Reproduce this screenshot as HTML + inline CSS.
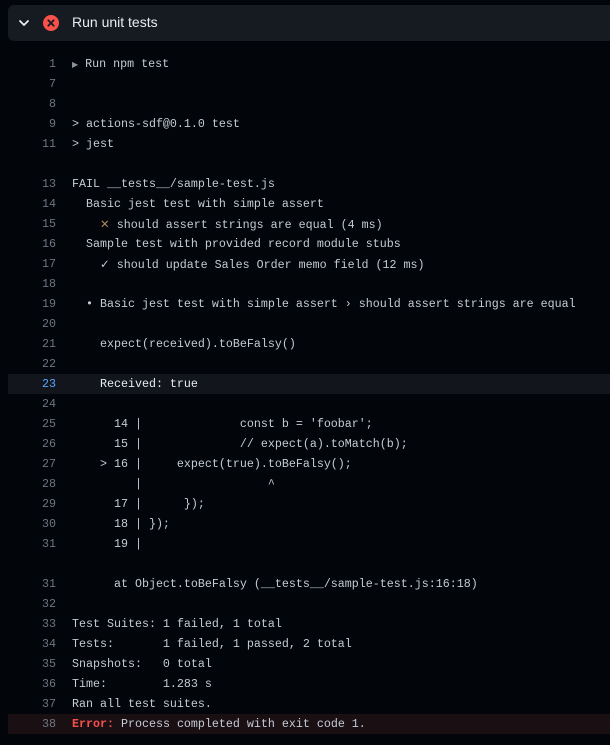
<!DOCTYPE html>
<html><head><meta charset="utf-8"><style>
html,body{margin:0;padding:0;background:#02050a;width:610px;height:745px;overflow:hidden}
.hdr{position:absolute;left:8px;top:5px;width:610px;height:36px;background:#161b22;border-radius:6px}
.hdr .t{position:absolute;left:64px;top:9px;font:14px "Liberation Sans",sans-serif;color:#e6edf3}
.log{position:absolute;left:0;top:54px;width:610px}
.r{position:relative;height:20px;line-height:20px;font:11.67px "Liberation Mono",monospace;color:#c4ccd4;white-space:pre}
.n{position:absolute;right:554px;top:3px;color:#6e7681;text-align:right}
.x{position:absolute;left:72px;top:3px}
.hl{background:#12161c;margin-left:8px}
.hl .n{color:#58a6ff}.hl .x{left:64px}
.er{background:#1a1014;margin-left:8px}
.er .x{left:64px}
</style></head><body>
<div class="hdr">
<svg style="position:absolute;left:10px;top:12px" width="12" height="12" viewBox="0 0 12 12"><path d="M2 4l4 4 4-4" fill="none" stroke="#e6edf3" stroke-width="1.8" stroke-linecap="round" stroke-linejoin="round"/></svg>
<svg style="position:absolute;left:35px;top:10px" width="16" height="16" viewBox="0 0 16 16"><circle cx="8" cy="8" r="8" fill="#f85149"/><path d="M5.3 5.3l5.4 5.4M10.7 5.3l-5.4 5.4" stroke="#161b22" stroke-width="1.8" stroke-linecap="round"/></svg>
<div class="t">Run unit tests</div>
</div>
<div class="log">
<div class="r"><span class="n">1</span><span class="x"><span style="font-size:8px;color:#8b949e">▶</span> Run npm test</span></div>
<div class="r"><span class="n">7</span></div>
<div class="r"><span class="n">8</span></div>
<div class="r"><span class="n">9</span><span class="x">&gt; actions-sdf@0.1.0 test</span></div>
<div class="r"><span class="n">11</span><span class="x">&gt; jest</span></div>
<div class="r"></div>
<div class="r"><span class="n">13</span><span class="x">FAIL __tests__/sample-test.js</span></div>
<div class="r"><span class="n">14</span><span class="x">  Basic jest test with simple assert</span></div>
<div class="r"><span class="n">15</span><span class="x">    <span style="color:#b08a5a">✕</span> should assert strings are equal (4 ms)</span></div>
<div class="r"><span class="n">16</span><span class="x">  Sample test with provided record module stubs</span></div>
<div class="r"><span class="n">17</span><span class="x">    ✓ should update Sales Order memo field (12 ms)</span></div>
<div class="r"><span class="n">18</span></div>
<div class="r"><span class="n">19</span><span class="x">  • Basic jest test with simple assert › should assert strings are equal</span></div>
<div class="r"><span class="n">20</span></div>
<div class="r"><span class="n">21</span><span class="x">    expect(received).toBeFalsy()</span></div>
<div class="r"><span class="n">22</span></div>
<div class="r hl"><span class="n">23</span><span class="x" style="color:#e6edf3">    Received: true</span></div>
<div class="r"><span class="n">24</span></div>
<div class="r"><span class="n">25</span><span class="x">      14 |              const b = 'foobar';</span></div>
<div class="r"><span class="n">26</span><span class="x">      15 |              // expect(a).toMatch(b);</span></div>
<div class="r"><span class="n">27</span><span class="x">    &gt; 16 |     expect(true).toBeFalsy();</span></div>
<div class="r"><span class="n">28</span><span class="x">         |                  ^</span></div>
<div class="r"><span class="n">29</span><span class="x">      17 |      });</span></div>
<div class="r"><span class="n">30</span><span class="x">      18 | });</span></div>
<div class="r"><span class="n">31</span><span class="x">      19 |</span></div>
<div class="r"></div>
<div class="r"><span class="n">31</span><span class="x">      at Object.toBeFalsy (__tests__/sample-test.js:16:18)</span></div>
<div class="r"><span class="n">32</span></div>
<div class="r"><span class="n">33</span><span class="x">Test Suites: 1 failed, 1 total</span></div>
<div class="r"><span class="n">34</span><span class="x">Tests:       1 failed, 1 passed, 2 total</span></div>
<div class="r"><span class="n">35</span><span class="x">Snapshots:   0 total</span></div>
<div class="r"><span class="n">36</span><span class="x">Time:        1.283 s</span></div>
<div class="r"><span class="n">37</span><span class="x">Ran all test suites.</span></div>
<div class="r er"><span class="n">38</span><span class="x"><span style="color:#f85149;font-weight:bold">Error:</span> Process completed with exit code 1.</span></div>
</div>
</body></html>
